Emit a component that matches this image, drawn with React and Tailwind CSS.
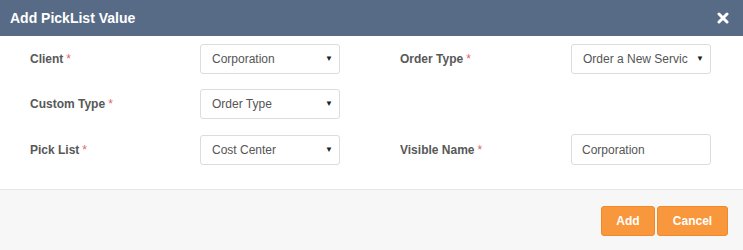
import React from 'react';

function Label({ text, className = '' }) {
  return (
    <div className={`text-[12px] font-bold text-[#585858] ${className}`}>
      {text}
      <span className="ml-[3px] font-normal text-[#e06666]">*</span>
    </div>
  );
}

function Select({ value }) {
  return (
    <div className="flex h-[30px] w-[140px] items-center justify-between rounded-[3px] border border-[#dcdcdc] bg-white pl-[11px] pr-[6px] text-[12px] text-[#555]">
      <span className="overflow-hidden whitespace-nowrap">{value}</span>
      <span className="ml-1 text-[8px] text-[#222]">▼</span>
    </div>
  );
}

function Input({ value }) {
  return (
    <div className="flex h-[31px] w-[140px] items-center rounded-[3px] border border-[#dcdcdc] bg-white px-[10px] text-[12px] text-[#555]">
      {value}
    </div>
  );
}

export default function App() {
  return (
    <div className="h-[250px] w-[743px] bg-white" style={{ fontFamily: '"Liberation Sans", Arial, sans-serif' }}>
      <div className="flex h-[36px] items-center justify-between bg-[#586b86] pl-[10px] pr-[14px]">
        <h2 className="text-[14px] font-bold text-white">Add PickList Value</h2>
        <svg width="12" height="12" viewBox="0 0 12 12">
          <path d="M2 2 L10 10 M10 2 L2 10" stroke="white" strokeWidth="3" strokeLinecap="round" />
        </svg>
      </div>

      <div className="flex flex-col gap-[15px] pl-[30px] pt-[8px] pb-[24px]">
        <div className="flex items-center">
          <Label text="Client" className="w-[170px]" />
          <Select value="Corporation" />
          <Label text="Order Type" className="ml-[60px] w-[171px]" />
          <Select value="Order a New Servic" />
        </div>
        <div className="flex items-center">
          <Label text="Custom Type" className="w-[170px]" />
          <Select value="Order Type" />
        </div>
        <div className="flex items-center">
          <Label text="Pick List" className="w-[170px]" />
          <Select value="Cost Center" />
          <Label text="Visible Name" className="ml-[60px] w-[171px]" />
          <Input value="Corporation" />
        </div>
      </div>

      <div className="flex h-[61px] justify-end gap-[2px] border-t border-[#e5e5e5] bg-[#f7f7f7] pr-[15px] pt-[16px]">
        <button className="h-[30px] w-[54px] rounded-[3px] border border-[#f0892a] bg-[#f8973b] text-[12px] font-bold text-white">Add</button>
        <button className="h-[30px] w-[71px] rounded-[3px] border border-[#f0892a] bg-[#f8973b] text-[12px] font-bold text-white">Cancel</button>
      </div>
    </div>
  );
}
